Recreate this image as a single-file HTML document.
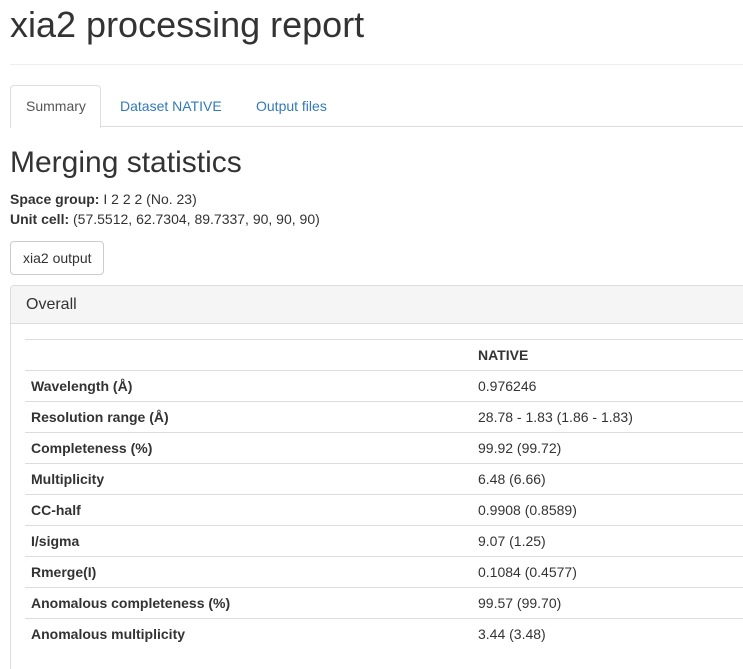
<!DOCTYPE html>
<html>
<head>
<meta charset="utf-8">
<style>
html,body{margin:0;padding:0;background:#fff;width:743px;height:669px;overflow:hidden;}
body{font-family:"Liberation Sans",Arial,sans-serif;font-size:14px;line-height:20px;color:#333;}
#w{position:relative;width:743px;height:669px;overflow:hidden;}
.a{position:absolute;white-space:nowrap;}
.line{position:absolute;height:1px;background:#ddd;}
b{font-weight:700;}
</style>
</head>
<body>
<div id="w">
<div class="a" style="left:10px;top:5px;font-size:36px;line-height:40px;font-weight:500;">xia2 processing report</div>
<div class="line" style="left:10px;top:64px;width:733px;background:#eee;"></div>

<div class="line" style="left:10px;top:126px;width:733px;"></div>
<div class="a" style="left:10px;top:85px;width:89px;height:42px;background:#fff;border:1px solid #ddd;border-bottom:0;border-radius:4px 4px 0 0;"></div>
<div class="a" style="left:26px;top:96px;color:#555;">Summary</div>
<div class="a" style="left:120px;top:96px;color:#337ab7;">Dataset NATIVE</div>
<div class="a" style="left:256px;top:96px;color:#337ab7;">Output files</div>

<div class="a" style="left:10px;top:146px;font-size:30px;line-height:33px;font-weight:500;">Merging statistics</div>
<div class="a" style="left:10px;top:189px;"><b>Space group:</b> I 2 2 2 (No. 23)</div>
<div class="a" style="left:10px;top:209px;"><b>Unit cell:</b> (57.5512, 62.7304, 89.7337, 90, 90, 90)</div>

<div class="a" style="left:10px;top:241px;width:92px;height:32px;border:1px solid #ccc;border-radius:4px;background:#fff;"></div>
<div class="a" style="left:23px;top:248px;">xia2 output</div>

<div class="a" style="left:10px;top:285px;width:760px;height:400px;border:1px solid #ddd;border-radius:4px;background:#fff;"></div>
<div class="a" style="left:11px;top:286px;width:740px;height:37px;background:#f5f5f5;border-bottom:1px solid #ddd;border-radius:3px 0 0 0;"></div>
<div class="a" style="left:26px;top:295px;font-size:16px;line-height:20px;">Overall</div>

<div class="line" style="left:25px;top:339px;width:718px;"></div>
<div class="line" style="left:25px;top:370px;width:718px;"></div>
<div class="line" style="left:25px;top:401px;width:718px;"></div>
<div class="line" style="left:25px;top:432px;width:718px;"></div>
<div class="line" style="left:25px;top:463px;width:718px;"></div>
<div class="line" style="left:25px;top:494px;width:718px;"></div>
<div class="line" style="left:25px;top:525px;width:718px;"></div>
<div class="line" style="left:25px;top:556px;width:718px;"></div>
<div class="line" style="left:25px;top:587px;width:718px;"></div>
<div class="line" style="left:25px;top:618px;width:718px;"></div>

<div class="a" style="left:478px;top:345px;"><b>NATIVE</b></div>

<div class="a" style="left:31px;top:376px;"><b>Wavelength (Å)</b></div>
<div class="a" style="left:478px;top:376px;">0.976246</div>
<div class="a" style="left:31px;top:407px;"><b>Resolution range (Å)</b></div>
<div class="a" style="left:478px;top:407px;">28.78 - 1.83 (1.86 - 1.83)</div>
<div class="a" style="left:31px;top:438px;"><b>Completeness (%)</b></div>
<div class="a" style="left:478px;top:438px;">99.92 (99.72)</div>
<div class="a" style="left:31px;top:469px;"><b>Multiplicity</b></div>
<div class="a" style="left:478px;top:469px;">6.48 (6.66)</div>
<div class="a" style="left:31px;top:500px;"><b>CC-half</b></div>
<div class="a" style="left:478px;top:500px;">0.9908 (0.8589)</div>
<div class="a" style="left:31px;top:531px;"><b>I/sigma</b></div>
<div class="a" style="left:478px;top:531px;">9.07 (1.25)</div>
<div class="a" style="left:31px;top:562px;"><b>Rmerge(I)</b></div>
<div class="a" style="left:478px;top:562px;">0.1084 (0.4577)</div>
<div class="a" style="left:31px;top:593px;"><b>Anomalous completeness (%)</b></div>
<div class="a" style="left:478px;top:593px;">99.57 (99.70)</div>
<div class="a" style="left:31px;top:624px;"><b>Anomalous multiplicity</b></div>
<div class="a" style="left:478px;top:624px;">3.44 (3.48)</div>
</div>
</body>
</html>
